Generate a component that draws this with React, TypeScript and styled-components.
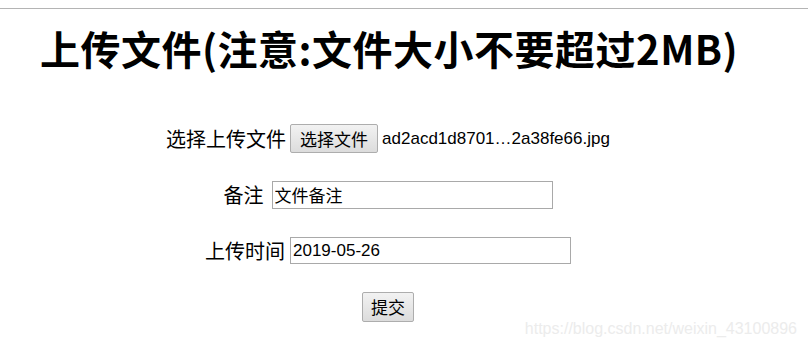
import React from 'react';
import styled, { createGlobalStyle } from 'styled-components';

const GlobalStyle = createGlobalStyle`
  html, body {
    margin: 0;
    padding: 0;
    background: #fff;
  }
  body {
    position: relative;
    min-height: 352px;
    font-family: 'Liberation Sans', 'Noto Sans CJK SC', sans-serif;
    color: #000;
  }
`;

export default function App() {
  return (
    <>
      <GlobalStyle />
      <Page>
        <TopRule />
        <Title>上传文件(注意:文件大小不要超过2MB)</Title>
        <Form onSubmit={(e) => e.preventDefault()}>
          <Row>
            <Label>选择上传文件</Label>
            <FilePicker>
              <GrayButton type="button">选择文件</GrayButton>
              <FileName>ad2acd1d8701…2a38fe66.jpg</FileName>
            </FilePicker>
          </Row>
          <Row $gap={8}>
            <Label>备注</Label>
            <TextInput $height={28} defaultValue="文件备注" />
          </Row>
          <Row $gap={5}>
            <Label>上传时间</Label>
            <TextInput $height={27} defaultValue="2019-05-26" />
          </Row>
          <Row>
            <GrayButton type="submit" $width={52} $height={30}>
              提交
            </GrayButton>
          </Row>
        </Form>
        <Watermark>https://blog.csdn.net/weixin_43100896</Watermark>
      </Page>
    </>
  );
}

const Page = styled.div`
  width: 808px;
`;

const TopRule = styled.div`
  margin-top: 8px;
  border-top: 1px solid #b4b4b4;
`;

const Title = styled.h1`
  margin: 15px 0 0;
  padding-left: 40px;
  font-family: 'Noto Sans CJK SC', 'Liberation Sans', sans-serif;
  font-size: 40px;
  font-weight: 700;
  line-height: 48px;
  letter-spacing: 0.5px;
  white-space: nowrap;
`;

const Form = styled.form`
  margin-top: 51px;
  padding-right: 32px;
  display: flex;
  flex-direction: column;
  align-items: center;
  gap: 25px;
`;

const Row = styled.div<{ $gap?: number }>`
  display: flex;
  align-items: center;
  height: 31px;
  gap: ${(p) => p.$gap ?? 4}px;
`;

const Label = styled.span`
  font-family: 'Noto Sans CJK SC', sans-serif;
  font-size: 20px;
  line-height: 24px;
`;

const FilePicker = styled.div`
  display: flex;
  align-items: center;
  gap: 4px;
`;

const GrayButton = styled.button<{ $width?: number; $height?: number }>`
  box-sizing: border-box;
  width: ${(p) => p.$width ?? 88}px;
  height: ${(p) => p.$height ?? 29}px;
  padding: 0;
  border: 1px solid #adadad;
  border-radius: 2px;
  background: linear-gradient(#f2f2f2, #dcdcdc);
  font-family: 'Noto Sans CJK SC', sans-serif;
  font-size: 17px;
  line-height: 20px;
  color: #000;
`;

const FileName = styled.span`
  font-family: 'Liberation Sans', sans-serif;
  font-size: 17px;
`;

const TextInput = styled.input<{ $height: number }>`
  box-sizing: border-box;
  width: 281px;
  height: ${(p) => p.$height}px;
  padding: 0 2px;
  border: 1px solid #a9a9a9;
  outline: none;
  font-family: 'Liberation Sans', 'Noto Sans CJK SC', sans-serif;
  font-size: 17px;
  color: #000;
  background: #fff;
`;

const Watermark = styled.div`
  position: absolute;
  top: 320px;
  right: 11px;
  font-family: 'Liberation Sans', sans-serif;
  font-size: 16px;
  color: #ececec;
  pointer-events: none;
`;
